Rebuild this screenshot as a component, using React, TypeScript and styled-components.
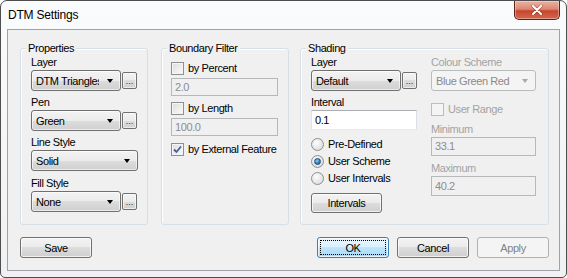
import React from "react";
import styled, { createGlobalStyle, css } from "styled-components";

const GlobalStyle = createGlobalStyle`
  html, body {
    margin: 0;
    padding: 0;
    background: #ffffff;
  }
  body {
    font-family: "Liberation Sans", Arial, sans-serif;
    font-size: 11px;
    letter-spacing: -0.4px;
    color: #000000;
  }
  * {
    box-sizing: border-box;
  }
`;

const Window = styled.div`
  width: 567px;
  height: 278px;
  border: 1px solid #4e4e4e;
  border-radius: 7px 7px 5px 5px;
  background: linear-gradient(#fafbfc, #eff1f3);
  display: flex;
  flex-direction: column;
  overflow: hidden;
`;

const TitleBar = styled.div`
  height: 28px;
  display: flex;
  justify-content: space-between;
  align-items: flex-start;
  padding: 0 6px 0 7px;
`;

const Title = styled.span`
  font-size: 12px;
  letter-spacing: -0.2px;
  line-height: 28px;
`;

const CloseButton = styled.div`
  width: 46px;
  height: 19px;
  border: 1px solid #5d2418;
  border-top: none;
  border-radius: 0 0 5px 5px;
  background: linear-gradient(#eab1a3 0%, #dc8874 45%, #c8462c 55%, #d2684f 100%);
  box-shadow: inset 0 0 0 1px rgba(255, 255, 255, 0.35);
  display: flex;
  align-items: center;
  justify-content: center;
`;

const Client = styled.div`
  flex: 1;
  margin: 0 6px 6px;
  border: 1px solid #9ea3a8;
  background: #f0f0f0;
  padding: 18px 10px 12px 12px;
  display: flex;
  flex-direction: column;
`;

const GroupRow = styled.div`
  display: flex;
  height: 177px;
`;

const Group = styled.div<{ $w: number; $gap?: number; $pt?: number; $pl: number }>`
  position: relative;
  width: ${(p) => p.$w}px;
  margin-left: ${(p) => p.$gap ?? 0}px;
  border: 1px solid #d5dfe5;
  border-radius: 3px;
  box-shadow: inset 1px 1px 0 #ffffff;
  padding: ${(p) => p.$pt ?? 6}px 0 0 ${(p) => p.$pl}px;
`;

const GroupTitle = styled.span`
  position: absolute;
  top: -7px;
  left: 5px;
  padding: 0 2px;
  line-height: 13px;
  background: #f0f0f0;
`;

const Columns = styled.div`
  display: flex;
  gap: 14px;
`;

const Column = styled.div<{ $w: number }>`
  width: ${(p) => p.$w}px;
  display: flex;
  flex-direction: column;
`;

const Field = styled.div<{ $mt?: number }>`
  margin-top: ${(p) => p.$mt ?? 0}px;
`;

const Label = styled.div<{ $disabled?: boolean }>`
  height: 15px;
  line-height: 15px;
  white-space: nowrap;
  color: ${(p) => (p.$disabled ? "#a3a3a3" : "#000000")};
`;

const ComboRow = styled.div`
  display: flex;
  align-items: center;
  gap: 1px;
`;

const Combo = styled.div<{ $w: number; $disabled?: boolean }>`
  width: ${(p) => p.$w}px;
  height: 21px;
  display: flex;
  align-items: center;
  padding-left: 4px;
  border: 1px solid #707070;
  border-radius: 3px;
  background: linear-gradient(#f3f3f3 0%, #ebebeb 50%, #dddddd 50%, #cfcfcf 100%);
  box-shadow: inset 0 0 0 1px rgba(255, 255, 255, 0.6);
  ${(p) =>
    p.$disabled &&
    css`
      border-color: #b8bcbf;
      background: #f4f4f4;
      box-shadow: none;
      color: #8a8a8a;
    `}
`;

const ComboText = styled.span`
  flex: 1;
  overflow: hidden;
  white-space: nowrap;
`;

const Arrow = styled.span<{ $disabled?: boolean }>`
  width: 0;
  height: 0;
  margin: 1px 7px 0 8px;
  border-left: 3.5px solid transparent;
  border-right: 3.5px solid transparent;
  border-top: 4px solid ${(p) => (p.$disabled ? "#a8a8a8" : "#000000")};
`;

const DotsButton = styled.div`
  width: 15px;
  height: 17px;
  border: 1px solid #707070;
  border-radius: 2px;
  background: linear-gradient(#f3f3f3 0%, #ebebeb 50%, #dddddd 50%, #cfcfcf 100%);
  box-shadow: inset 0 0 0 1px rgba(255, 255, 255, 0.6);
  font-size: 9px;
  line-height: 9px;
  letter-spacing: 0;
  display: flex;
  justify-content: center;
  align-items: flex-end;
  padding-bottom: 2px;
  color: #333333;
`;

const TextBox = styled.div<{ $w: number; $h: number; $mt?: number; $disabled?: boolean }>`
  width: ${(p) => p.$w}px;
  height: ${(p) => p.$h}px;
  margin-top: ${(p) => p.$mt ?? 0}px;
  line-height: ${(p) => p.$h - 2}px;
  padding-left: 3px;
  border: 1px solid #abadb3;
  border-color: #abadb3 #dbdfe6 #e3e9ef #e2e3ea;
  background: #ffffff;
  ${(p) =>
    p.$disabled &&
    css`
      border-color: #b5b9bc;
      background: #f0f0f0;
      color: #8d8d8d;
    `}
`;

const CheckRow = styled.div<{ $mt?: number; $disabled?: boolean }>`
  display: flex;
  align-items: center;
  height: 16px;
  margin-top: ${(p) => p.$mt ?? 0}px;
  gap: 4px;
  white-space: nowrap;
  color: ${(p) => (p.$disabled ? "#a3a3a3" : "#000000")};
`;

const Box = styled.span<{ $disabled?: boolean }>`
  width: 13px;
  height: 13px;
  flex: none;
  border: 1px solid #8e8f8f;
  background: linear-gradient(135deg, #dcdcdc, #fbfbfb);
  box-shadow: inset 0 0 0 1px #f4f4f4;
  display: flex;
  align-items: center;
  justify-content: center;
  ${(p) =>
    p.$disabled &&
    css`
      border-color: #bcbcbc;
      background: #f4f4f4;
      box-shadow: none;
    `}
`;

const RadioRow = styled.div<{ $mt?: number }>`
  display: flex;
  align-items: center;
  height: 16px;
  margin-top: ${(p) => p.$mt ?? 0}px;
  gap: 4px;
  white-space: nowrap;
`;

const RadioCircle = styled.span<{ $on?: boolean }>`
  width: 13px;
  height: 13px;
  flex: none;
  border-radius: 50%;
  border: 1px solid #8e8f8f;
  background: radial-gradient(circle at 40% 35%, #fdfdfd, #d4d4d4);
  display: flex;
  align-items: center;
  justify-content: center;
  &::after {
    content: "";
    display: ${(p) => (p.$on ? "block" : "none")};
    width: 7px;
    height: 7px;
    border-radius: 50%;
    background: radial-gradient(circle at 40% 35%, #8fd3f7, #2a7ab7 60%, #1a4f8a);
    border: 1px solid #1e4f7d;
    box-sizing: border-box;
  }
`;

const ButtonRow = styled.div`
  display: flex;
  justify-content: space-between;
  margin-top: 12px;
`;

const ButtonGroup = styled.div`
  display: flex;
  gap: 8px;
`;

const Button = styled.div<{ $w?: number; $h?: number; $mt?: number; $variant?: "default" | "disabled" }>`
  width: ${(p) => p.$w ?? 72}px;
  height: ${(p) => p.$h ?? 21}px;
  margin-top: ${(p) => p.$mt ?? 0}px;
  display: flex;
  align-items: center;
  justify-content: center;
  border: 1px solid #707070;
  border-radius: 3px;
  background: linear-gradient(#f3f3f3 0%, #ebebeb 50%, #dddddd 50%, #cfcfcf 100%);
  box-shadow: inset 0 0 0 1px rgba(255, 255, 255, 0.7);
  position: relative;
  ${(p) =>
    p.$variant === "default" &&
    css`
      border-color: #3c7fb1;
      background: linear-gradient(#eaf6fd 0%, #d9f0fc 50%, #bee6fd 50%, #a7d9f5 100%);
      &::after {
        content: "";
        position: absolute;
        inset: 2px;
        border: 1px dotted #000000;
      }
    `}
  ${(p) =>
    p.$variant === "disabled" &&
    css`
      border-color: #adb2b5;
      background: #f4f4f4;
      box-shadow: none;
      color: #838383;
    `}
`;

const Check = () => (
  <svg width="9" height="9" viewBox="0 0 9 9">
    <path d="M1 4.5 L3.5 7 L8 1.5" fill="none" stroke="#4a5f97" strokeWidth="1.8" />
  </svg>
);

const CloseX = () => (
  <svg width="12" height="10" viewBox="0 0 12 10">
    <path d="M2 1 L10 9 M10 1 L2 9" stroke="#5a1a10" strokeWidth="3.2" strokeLinecap="round" opacity="0.45" />
    <path d="M2 1 L10 9 M10 1 L2 9" stroke="#ffffff" strokeWidth="2" strokeLinecap="round" />
  </svg>
);

const ComboBox = ({ text, w, disabled }: { text: string; w: number; disabled?: boolean }) => (
  <Combo $w={w} $disabled={disabled}>
    <ComboText>{text}</ComboText>
    <Arrow $disabled={disabled} />
  </Combo>
);

const App = () => {
  return (
    <>
      <GlobalStyle />
      <Window>
        <TitleBar>
          <Title>DTM Settings</Title>
          <CloseButton>
            <CloseX />
          </CloseButton>
        </TitleBar>
        <Client>
          <GroupRow>
            <Group $w={128} $pl={10}>
              <GroupTitle>Properties</GroupTitle>
              <Field>
                <Label>Layer</Label>
                <ComboRow>
                  <ComboBox text="DTM Triangles" w={90} />
                  <DotsButton>...</DotsButton>
                </ComboRow>
              </Field>
              <Field $mt={4}>
                <Label>Pen</Label>
                <ComboRow>
                  <ComboBox text="Green" w={90} />
                  <DotsButton>...</DotsButton>
                </ComboRow>
              </Field>
              <Field $mt={4}>
                <Label>Line Style</Label>
                <ComboBox text="Solid" w={107} />
              </Field>
              <Field $mt={5}>
                <Label>Fill Style</Label>
                <ComboRow>
                  <ComboBox text="None" w={90} />
                  <DotsButton>...</DotsButton>
                </ComboRow>
              </Field>
            </Group>

            <Group $w={128} $gap={13} $pl={9} $pt={11}>
              <GroupTitle>Boundary Filter</GroupTitle>
              <CheckRow>
                <Box />
                by Percent
              </CheckRow>
              <TextBox $w={107} $h={18} $mt={2} $disabled>
                2.0
              </TextBox>
              <CheckRow $mt={4}>
                <Box />
                by Length
              </CheckRow>
              <TextBox $w={107} $h={18} $mt={2} $disabled>
                100.0
              </TextBox>
              <CheckRow $mt={5}>
                <Box>
                  <Check />
                </Box>
                by External Feature
              </CheckRow>
            </Group>

            <Group $w={249} $gap={11} $pl={10}>
              <GroupTitle>Shading</GroupTitle>
              <Columns>
                <Column $w={106}>
                  <Label>Layer</Label>
                  <ComboRow>
                    <ComboBox text="Default" w={90} />
                    <DotsButton>...</DotsButton>
                  </ComboRow>
                  <Field $mt={4}>
                    <Label>Interval</Label>
                    <TextBox $w={106} $h={20}>
                      0.1
                    </TextBox>
                  </Field>
                  <RadioRow $mt={6}>
                    <RadioCircle />
                    Pre-Defined
                  </RadioRow>
                  <RadioRow $mt={1}>
                    <RadioCircle $on />
                    User Scheme
                  </RadioRow>
                  <RadioRow $mt={1}>
                    <RadioCircle />
                    User Intervals
                  </RadioRow>
                  <Button $w={71} $h={20} $mt={7}>
                    Intervals
                  </Button>
                </Column>
                <Column $w={105}>
                  <Label $disabled>Colour Scheme</Label>
                  <ComboBox text="Blue Green Red" w={105} disabled />
                  <CheckRow $mt={10} $disabled>
                    <Box $disabled />
                    User Range
                  </CheckRow>
                  <Field $mt={5}>
                    <Label $disabled>Minimum</Label>
                    <TextBox $w={105} $h={19} $disabled>
                      33.1
                    </TextBox>
                  </Field>
                  <Field $mt={5}>
                    <Label $disabled>Maximum</Label>
                    <TextBox $w={105} $h={20} $disabled>
                      40.2
                    </TextBox>
                  </Field>
                </Column>
              </Columns>
            </Group>
          </GroupRow>
          <ButtonRow>
            <Button>Save</Button>
            <ButtonGroup>
              <Button $variant="default">OK</Button>
              <Button>Cancel</Button>
              <Button $variant="disabled">Apply</Button>
            </ButtonGroup>
          </ButtonRow>
        </Client>
      </Window>
    </>
  );
};

export default App;
